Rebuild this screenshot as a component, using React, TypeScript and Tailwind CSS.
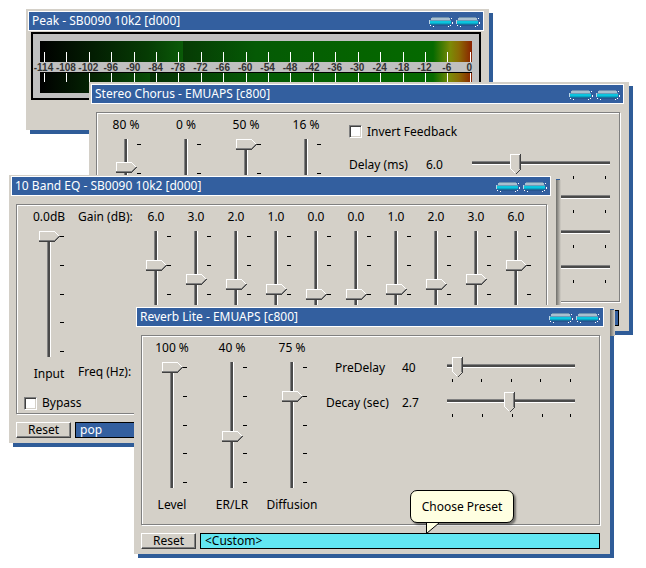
import type { ReactNode } from "react";

const scale = [-114, -108, -102, -96, -90, -84, -78, -72, -66, -60, -54, -48, -42, -36, -30, -24, -18, -12, -6, 0];

const PillIcon = () => (
  <svg width="24" height="11" viewBox="0 0 24 11" shapeRendering="crispEdges">
    <rect x="3" y="1" width="17" height="1" fill="#6f90ad" />
    <rect x="2" y="2" width="19" height="2" fill="#a9bfcf" />
    <rect x="1" y="4" width="21" height="1" fill="#6a9cb8" />
    <rect x="1" y="5" width="21" height="2" fill="#0bc4de" />
    <rect x="1" y="7" width="21" height="1" fill="#08a6c6" />
    <rect x="2" y="8" width="19" height="1" fill="#1a6f9c" />
    <rect x="3" y="9" width="17" height="1" fill="#27558f" />
    <rect x="0" y="4" width="1" height="4" fill="#b9d4e4" />
    <rect x="22" y="2" width="1" height="1" fill="#ffffff" />
    <rect x="23" y="6" width="1" height="2" fill="#ffffff" />
    <rect x="1" y="9" width="1" height="1" fill="#ffffff" />
    <rect x="4" y="10" width="1" height="1" fill="#ffffff" />
    <rect x="21" y="9" width="1" height="1" fill="#ffffff" />
    <rect x="19" y="10" width="1" height="1" fill="#ffffff" />
  </svg>
);

const Window = ({ title, className, pt = "pt-[2px]", pr, children }: { title: string; className: string; pt?: string; pr: string; children: ReactNode }) => (
  <div className={`absolute bg-[#d4d0c8] pl-[2px] shadow-[4px_4px_0_#2f5c98] ${pt} ${pr} ${className}`}>
    <div className="flex h-[20px] items-center justify-between border border-white bg-[#335f9f] pl-[3px] pr-[3px] text-white">
      <span>{title}</span>
      <div className="flex gap-[3px]">
        <PillIcon />
        <PillIcon />
      </div>
    </div>
    {children}
  </div>
);

// grey fade that a window throws on the window below it
const Fade = ({ className }: { className: string }) => (
  <div className={`absolute left-full w-[5px] bg-gradient-to-r from-[#6e6e6a] to-[#d4d0c8] ${className}`} />
);

const Panel = ({ className, children }: { className: string; children: ReactNode }) => (
  <div className={`relative border border-[#808080] shadow-[inset_1px_1px_0_#fff,1px_1px_0_#fff] ${className}`}>{children}</div>
);

const ThumbV = ({ top }: { top: number }) => (
  <svg className="absolute left-[-8px]" style={{ top }} width="22" height="12" viewBox="0 0 22 12" shapeRendering="crispEdges">
    <polygon points="0,0 15,0 21,5 15,11 0,11" fill="#d4d0c8" />
    <path d="M0 0.5H15M0.5 0V10" stroke="#fff" />
    <path d="M15 0.5l1 0M16 1.5h1M17 2.5h1M18 3.5h1M19 4.5h1" stroke="#fff" />
    <path d="M0 9.5H15" stroke="#808080" />
    <path d="M0 10.5H15" stroke="#404040" />
    <path d="M15 9.5h1M16 8.5h1M17 7.5h1M18 6.5h1M19 5.5h1" stroke="#808080" />
    <path d="M15 10.5h1M16 9.5h1M17 8.5h1M18 7.5h1M19 6.5h1M20 5.5h1" stroke="#404040" />
  </svg>
);

const ThumbH = ({ left }: { left: number }) => (
  <svg className="absolute top-[-7px]" style={{ left }} width="11" height="21" viewBox="0 0 11 21" shapeRendering="crispEdges">
    <polygon points="0,0 10,0 10,15 5,20 0,15" fill="#d4d0c8" />
    <path d="M0 0.5H10M0.5 0V15" stroke="#fff" />
    <path d="M1 15.5h1M2 16.5h1M3 17.5h1M4 18.5h1" stroke="#fff" />
    <path d="M9.5 1V15" stroke="#808080" />
    <path d="M10.5 0V16" stroke="#404040" />
    <path d="M9 16.5h1M8 17.5h1M7 18.5h1M6 19.5h1" stroke="#404040" />
  </svg>
);

const VSlider = ({ top, height = 126 }: { top: number; height?: number }) => (
  <div className="relative mx-auto w-[4px]" style={{ height }}>
    <div className="h-full w-[4px] border-x border-l-[#808080] border-r-white bg-[#4a4a4a]" />
    <ThumbV top={top} />
    <div className="absolute left-[13px] top-[5px] flex flex-col justify-between" style={{ height: height - 10 }}>
      {[0, 1, 2, 3, 4].map((i) => (
        <div key={i} className="h-px w-[4px] bg-black" />
      ))}
    </div>
  </div>
);

const HSlider = ({ left, width, ticks }: { left: number; width: number; ticks: number[] }) => (
  <div className="relative" style={{ width }}>
    <div className="h-[4px] border-y border-t-[#808080] border-b-white bg-[#4a4a4a]" />
    <ThumbH left={left} />
    {ticks.map((x) => (
      <div key={x} className="absolute top-[15px] h-[3px] w-px bg-black" style={{ left: x }} />
    ))}
  </div>
);

const SliderCol = ({ value, label, top, width }: { value: string; label?: string; top: number; width: string }) => (
  <div className={`flex flex-col items-center ${width}`}>
    <div className="h-[15px] leading-[15px]">{value}</div>
    <div className="mt-[7px] w-full">
      <VSlider top={top} />
    </div>
    {label && <div className="mt-[9px] leading-[15px]">{label}</div>}
  </div>
);

const Checkbox = () => (
  <div className="h-[13px] w-[13px] border border-[#808080] border-b-white border-r-white bg-white shadow-[inset_1px_1px_0_#404040,inset_-1px_-1px_0_#d4d0c8]" />
);

const ResetButton = () => (
  <div className="flex h-[16px] w-[55px] shrink-0 items-center justify-center border border-white border-b-[#404040] border-r-[#404040] shadow-[inset_-1px_-1px_0_#808080]">
    Reset
  </div>
);

const Meter = () => (
  <div className="ml-[3px] mr-[3px] mt-px h-[68px] border-2 border-black bg-[#c0c0c0] px-[7px] py-[7px]">
    <div className="relative h-[52px]">
      <div className="h-[21px] bg-[linear-gradient(90deg,#000_0%,#063c04_25%,#0a5a08_33%,#063a04_33%,#055a05_50%,#056400_75%,#056a00_91%,#7c8a06_95%,#8a6a04_97%,#8a2000_100%)]" />
      <div className="h-[11px] border-b border-black bg-[#c0c0c0]" />
      <div className="h-[20px] bg-[linear-gradient(90deg,#000_0%,#084c06_25.5%,#043004_25.5%,#055a05_50%,#056400_75%,#056a00_91%,#7c8a06_95%,#8a6a04_97%,#8a2000_100%)]" />
      <div className="absolute left-[4px] right-px top-[11px] flex justify-between">
        {scale.map((v) => (
          <div key={v} className="flex w-px flex-col items-center">
            <div className="h-[10px] w-px shrink-0 bg-white" />
            <div className="h-[11px] shrink-0 -translate-x-px whitespace-nowrap font-['Liberation_Sans',sans-serif] text-[10px] font-bold leading-[11px] tracking-normal text-[#333]">
              {v}
            </div>
            <div className="h-[9px] w-px shrink-0 bg-white" />
          </div>
        ))}
      </div>
    </div>
  </div>
);

const eqBands = [
  { value: "6.0", top: 29 },
  { value: "3.0", top: 43 },
  { value: "2.0", top: 48 },
  { value: "1.0", top: 53 },
  { value: "0.0", top: 58 },
  { value: "0.0", top: 58 },
  { value: "1.0", top: 53 },
  { value: "2.0", top: 48 },
  { value: "3.0", top: 43 },
  { value: "6.0", top: 29 },
];

const rowTicks = [6, 38, 69, 101, 133];

export default function App() {
  return (
    <div className="relative h-[568px] w-[646px] overflow-hidden bg-white font-['Noto_Sans',sans-serif] text-[12px] text-black">
      <Window title="Peak - SB0090 10k2 [d000]" className="left-[26px] top-[9px] h-[121px] w-[463px]" pr="pr-[5px]">
        <Meter />
      </Window>

      <Window title="Stereo Chorus - EMUAPS [c800]" className="left-[89px] top-[82px] h-[249px] w-[540px]" pr="pr-[5px]">
        <Panel className="ml-[5px] mr-[4px] mt-[8px] flex h-[190px] pt-[4px]">
          <div className="ml-[-1px] flex">
            <SliderCol value="80 %" top={23} width="w-[60px]" />
            <SliderCol value="0 %" top={60} width="w-[60px]" />
            <SliderCol value="50 %" top={0} width="w-[60px]" />
            <SliderCol value="16 %" top={60} width="w-[60px]" />
          </div>
          <div className="ml-[13px] flex flex-col">
            <div className="mt-[7px] flex h-[15px] items-center gap-[5px]">
              <Checkbox />
              <span>Invert Feedback</span>
            </div>
            <div className="mt-[18px] flex h-[15px] items-center">
              <span className="w-[77px]">Delay (ms)</span>
              <span className="w-[46px]">6.0</span>
              <div className="-mt-[4px]">
                <HSlider left={38} width={138} ticks={rowTicks} />
              </div>
            </div>
            <div className="ml-[123px] mt-[23px] flex flex-col gap-[31px]">
              {[0, 1, 2].map((i) => (
                <HSlider key={i} left={20} width={138} ticks={rowTicks} />
              ))}
            </div>
          </div>
        </Panel>
        <div className="ml-[5px] mr-[5px] mt-[8px] flex gap-[4px]">
          <ResetButton />
          <div className="h-[16px] flex-1 border border-black bg-[#335f9f]" />
        </div>
      </Window>

      <Window title="10 Band EQ - SB0090 10k2 [d000]" className="left-[9px] top-[175px] h-[268px] w-[547px]" pt="pt-px" pr="pr-[5px]">
        <Fade className="top-[5px] h-[125px]" />
        <Panel className="ml-[5px] mr-[4px] mt-[8px] flex h-[210px] pt-[4px]">
          <div className="flex w-[64px] flex-col items-center">
            <SliderCol value="0.0dB" label="Input" top={0} width="w-full" />
          </div>
          <div className="ml-[-3px] flex w-[59px] shrink-0 flex-col">
            <div className="h-[15px] leading-[15px]">Gain (dB):</div>
            <div className="mt-[140px] leading-[15px]">Freq (Hz):</div>
          </div>
          <div className="ml-[-1px] flex">
            {eqBands.map((b, i) => (
              <SliderCol key={i} value={b.value} top={b.top} width="w-[40px]" />
            ))}
          </div>
          <div className="absolute bottom-px left-[7px] flex items-center gap-[5px]">
            <Checkbox />
            <span>Bypass</span>
          </div>
        </Panel>
        <div className="ml-[5px] mr-[5px] mt-[8px] flex gap-[4px]">
          <ResetButton />
          <div className="flex h-[16px] flex-1 items-center border border-black bg-[#335f9f] pl-[4px] text-white">pop</div>
        </div>
      </Window>

      <Window title="Reverb Lite - EMUAPS [c800]" className="left-[134px] top-[305px] h-[249px] w-[476px]" pr="pr-[6px]">
        <Fade className="top-[5px] h-[26px]" />
        <Panel className="ml-[5px] mr-[4px] mt-[8px] flex h-[190px] pt-[4px]">
          <div className="flex">
            <SliderCol value="100 %" label="Level" top={0} width="w-[60px]" />
            <SliderCol value="40 %" label="ER/LR" top={69} width="w-[60px]" />
            <SliderCol value="75 %" label="Diffusion" top={29} width="w-[60px]" />
          </div>
          <div className="ml-px flex flex-col">
            <div className="mt-[20px] flex h-[15px] items-center">
              <span className="ml-[12px] w-[67px]">PreDelay</span>
              <span className="w-[45px]">40</span>
              <div className="-mt-[4px]">
                <HSlider left={5} width={128} ticks={[5, 34, 64, 93, 123]} />
              </div>
            </div>
            <div className="mt-[20px] flex h-[15px] items-center">
              <span className="ml-[3px] w-[76px]">Decay (sec)</span>
              <span className="w-[45px]">2.7</span>
              <div className="-mt-[4px]">
                <HSlider left={57} width={128} ticks={[5, 35, 65, 95, 123]} />
              </div>
            </div>
          </div>
        </Panel>
        <div className="ml-[5px] mr-[4px] mt-[8px] flex gap-[4px]">
          <ResetButton />
          <div className="flex h-[16px] flex-1 items-center border border-black bg-[#62e6f2] pl-[4px]">&lt;Custom&gt;</div>
        </div>
      </Window>

      <div className="absolute left-[410px] top-[490px] flex h-[33px] w-[104px] items-center justify-center rounded-[7px] border border-black bg-[#ffffe1] shadow-[2px_2px_2px_rgba(0,0,0,0.45)]">
        Choose Preset
        <svg className="absolute left-[14px] top-[30px]" width="16" height="14" viewBox="0 0 16 14">
          <path d="M2 2 L4 2 L14 2 L2 12 Z" fill="#ffffe1" />
          <path d="M1.5 2 L1.5 12.5 L14 2" fill="none" stroke="#000" />
        </svg>
      </div>
    </div>
  );
}
